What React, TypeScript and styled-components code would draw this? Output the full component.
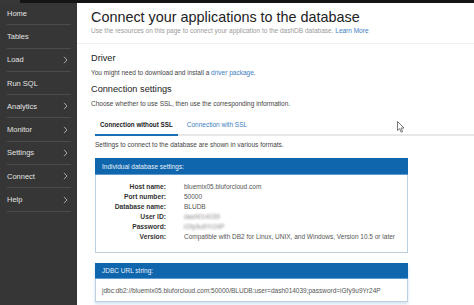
import * as React from 'react';
import styled, { createGlobalStyle } from 'styled-components';

const GlobalStyle = createGlobalStyle`
  html, body {
    margin: 0;
    padding: 0;
    background: #fff;
    font-family: "Liberation Sans", Arial, sans-serif;
  }
  * {
    box-sizing: border-box;
  }
`;

const navItems = [
  { label: 'Home', sub: false },
  { label: 'Tables', sub: false },
  { label: 'Load', sub: true },
  { label: 'Run SQL', sub: false },
  { label: 'Analytics', sub: true },
  { label: 'Monitor', sub: true },
  { label: 'Settings', sub: true },
  { label: 'Connect', sub: true },
  { label: 'Help', sub: true },
];

const settings = [
  { label: 'Host name:', value: 'bluemix05.bluforcloud.com' },
  { label: 'Port number:', value: '50000' },
  { label: 'Database name:', value: 'BLUDB' },
  { label: 'User ID:', value: 'dash014039', hidden: true },
  { label: 'Password:', value: 'iGfy9u9Yr24P', hidden: true },
  {
    label: 'Version:',
    value:
      'Compatible with DB2 for Linux, UNIX, and Windows, Version 10.5 or later',
  },
];

const Chevron = () => (
  <svg width="5" height="8" viewBox="0 0 5 8">
    <polyline
      points="1,0.8 4,4 1,7.2"
      fill="none"
      stroke="#a8a8a8"
      strokeWidth="1"
    />
  </svg>
);

const Cursor = () => (
  <svg width="8" height="12" viewBox="0 0 8 12">
    <path
      d="M0.5 0.5 L0.5 9.5 L2.6 7.6 L4.2 11.2 L5.6 10.6 L4.1 7.1 L7 7 Z"
      fill="#fff"
      stroke="#555"
      strokeWidth="0.8"
    />
  </svg>
);

const App = () => {
  return (
    <>
      <GlobalStyle />
      <Page>
        <TopBar>
          <TopStub />
        </TopBar>
        <Body>
          <Sidebar>
            {navItems.map((item) => (
              <NavItem key={item.label}>
                <span>{item.label}</span>
                {item.sub && <Chevron />}
              </NavItem>
            ))}
          </Sidebar>
          <Main>
            <Header>
              <Title>Connect your applications to the database</Title>
              <Subtitle>
                Use the resources on this page to connect your application to
                the dashDB database. <Link>Learn More</Link>
              </Subtitle>
            </Header>
            <Section>
              <SectionTitle>Driver</SectionTitle>
              <Text>
                You might need to download and install a{' '}
                <Link>driver package</Link>.
              </Text>
              <SectionTitle $top={5}>Connection settings</SectionTitle>
              <Text>
                Choose whether to use SSL, then use the corresponding
                information.
              </Text>
            </Section>
            <TabsArea>
              <TabBar>
                <Tab $active>Connection without SSL</Tab>
                <Tab>Connection with SSL</Tab>
              </TabBar>
              <TabText>
                Settings to connect to the database are shown in various
                formats.
              </TabText>
              <Panel>
                <PanelHeader>Individual database settings:</PanelHeader>
                <SettingsGrid>
                  {settings.map((s) => (
                    <React.Fragment key={s.label}>
                      <SettingLabel>{s.label}</SettingLabel>
                      <SettingValue $hidden={s.hidden}>{s.value}</SettingValue>
                    </React.Fragment>
                  ))}
                </SettingsGrid>
              </Panel>
              <Panel $gap={10} $shadow>
                <PanelHeader $height={16}>JDBC URL string:</PanelHeader>
                <UrlBody>
                  jdbc:db2://bluemix05.bluforcloud.com:50000/BLUDB:user=dash014039;password=iGfy9u9Yr24P
                </UrlBody>
              </Panel>
            </TabsArea>
            <CursorMark>
              <Cursor />
            </CursorMark>
          </Main>
        </Body>
      </Page>
    </>
  );
};

export default App;

const Page = styled.div`
  width: 474px;
  height: 305px;
  overflow: hidden;
  display: flex;
  flex-direction: column;
  background: #fff;
`;

const TopBar = styled.div`
  height: 3px;
  background: #141414;
  display: flex;
  flex-shrink: 0;
`;

const TopStub = styled.div`
  width: 20px;
  background: #383838;
`;

const Body = styled.div`
  flex: 1;
  display: flex;
  min-height: 0;
`;

const Sidebar = styled.nav`
  width: 77px;
  flex-shrink: 0;
  background: #363636;
  display: flex;
  flex-direction: column;
  padding: 0 6px 0 7px;
`;

const NavItem = styled.div`
  height: 23.3px;
  display: flex;
  align-items: center;
  justify-content: space-between;
  padding-right: 3px;
  border-bottom: 1px solid #4c4c4c;
  color: #e2e2e2;
  font-size: 7.5px;

  &:first-child {
    height: 22.3px;
  }
`;

const Main = styled.main`
  position: relative;
  flex: 1;
  display: flex;
  flex-direction: column;
  color: #444;
`;

const Header = styled.header`
  padding: 5px 14px 7px;
  border-bottom: 1px solid #f0f0f0;
`;

const Title = styled.h1`
  margin: 0;
  font-size: 14.4px;
  line-height: 18px;
  font-weight: 400;
  color: #222;
`;

const Subtitle = styled.p`
  margin: 0;
  font-size: 6.5px;
  line-height: 10px;
  color: #9a9a9a;
`;

const Link = styled.span`
  color: #3b7dc0;
`;

const Section = styled.section`
  padding: 8px 14px 0;
`;

const SectionTitle = styled.h2<{ $top?: number }>`
  margin: ${(p) => p.$top || 0}px 0 4px;
  font-size: 9.2px;
  line-height: 12px;
  font-weight: 400;
  color: #222;
`;

const Text = styled.p`
  margin: 0;
  font-size: 6.5px;
  line-height: 10px;
  color: #444;
`;

const TabsArea = styled.div`
  padding: 8px 0 0 18px;
`;

const TabBar = styled.div`
  display: flex;
  gap: 4px;
  border-bottom: 2px solid #e8e8e8;
`;

const Tab = styled.div<{ $active?: boolean }>`
  height: 19px;
  margin-bottom: -2px;
  padding: 0 5px 2px;
  display: flex;
  align-items: center;
  font-size: ${(p) => (p.$active ? 6.3 : 6.5)}px;
  font-weight: ${(p) => (p.$active ? 700 : 400)};
  color: ${(p) => (p.$active ? '#222' : '#3b7dc0')};
  border-bottom: 2px solid ${(p) => (p.$active ? '#1a6fb4' : 'transparent')};
`;

const TabText = styled.p`
  margin: 4px 0 0;
  font-size: 6.5px;
  line-height: 10px;
  color: #444;
`;

const Panel = styled.div<{ $gap?: number; $shadow?: boolean }>`
  width: 313px;
  margin-top: ${(p) => p.$gap || 8}px;
  border: 1px solid #bcd0e2;
  border-top: none;
  box-shadow: ${(p) =>
    p.$shadow ? '0 2px 3px rgba(120, 165, 210, 0.35)' : 'none'};
`;

const PanelHeader = styled.div<{ $height?: number }>`
  height: ${(p) => p.$height || 17}px;
  margin: 0 -1px;
  padding: 0 7px;
  display: flex;
  align-items: center;
  background: #0f66ad;
  border-bottom: 1px solid #5c9bd1;
  color: #e8f1fa;
  font-size: 6.5px;
`;

const SettingsGrid = styled.div`
  display: grid;
  grid-template-columns: 70px 1fr;
  column-gap: 18px;
  padding: 7px 0 10px;
  font-size: 6.5px;
  line-height: 10px;
`;

const SettingLabel = styled.div`
  text-align: right;
  font-weight: 700;
  font-size: 6.7px;
  color: #333;
`;

const SettingValue = styled.div<{ $hidden?: boolean }>`
  color: ${(p) => (p.$hidden ? '#8a8a8a' : '#555')};
  filter: ${(p) => (p.$hidden ? 'blur(0.9px)' : 'none')};
  white-space: nowrap;
`;

const UrlBody = styled.div`
  padding: 7px 6px 5px;
  font-size: 6.5px;
  line-height: 10px;
  color: #555;
  white-space: nowrap;
`;

const CursorMark = styled.div`
  position: absolute;
  left: 320px;
  top: 118px;
  line-height: 0;
`;
